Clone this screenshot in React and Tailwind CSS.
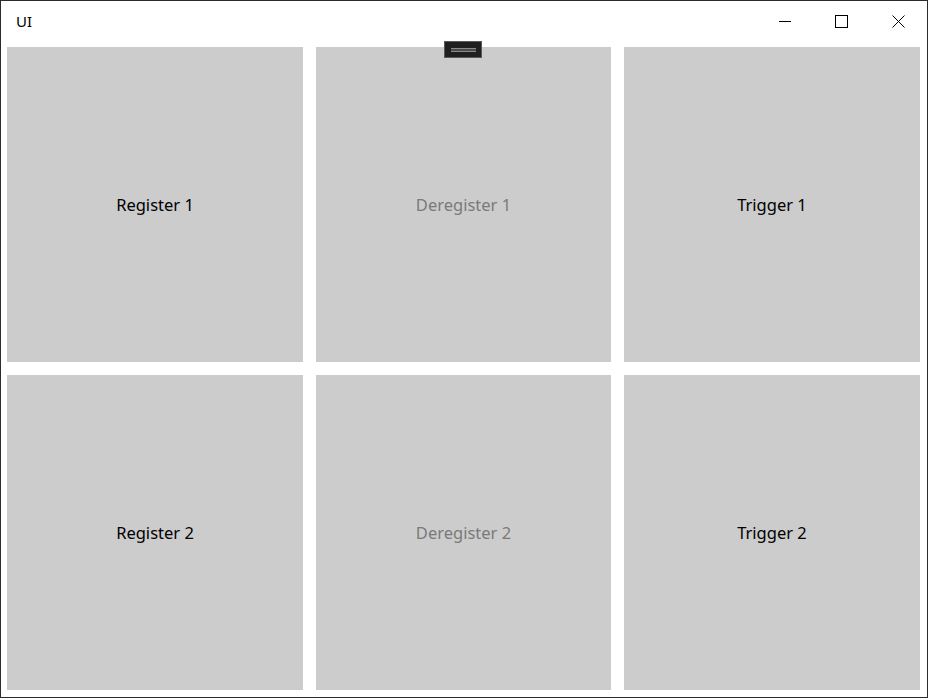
export default function App() {
  const cells = [
    { label: 'Register 1', enabled: true },
    { label: 'Deregister 1', enabled: false },
    { label: 'Trigger 1', enabled: true },
    { label: 'Register 2', enabled: true },
    { label: 'Deregister 2', enabled: false },
    { label: 'Trigger 2', enabled: true },
  ];

  return (
    <div
      className="relative w-[928px] h-[698px] border border-[#2b2b2b] bg-white flex flex-col"
      style={{ fontFamily: '"Segoe UI", "Noto Sans", "Open Sans", sans-serif' }}
    >
      {/* title bar */}
      <div className="h-[40px] flex items-center shrink-0">
        <span className="pl-[15px] text-[15px] text-black flex-1">UI</span>
        <div className="flex h-full">
          <button className="w-[57px] h-full flex items-center justify-center">
            <svg width="12" height="12" viewBox="0 0 12 12">
              <path d="M0 6.5H12" stroke="#000" strokeWidth="1" />
            </svg>
          </button>
          <button className="w-[57px] h-full flex items-center justify-center">
            <svg width="13" height="13" viewBox="0 0 13 13">
              <rect x="0.5" y="0.5" width="12" height="12" fill="none" stroke="#000" strokeWidth="1" />
            </svg>
          </button>
          <button className="w-[57px] h-full flex items-center justify-center">
            <svg width="13" height="13" viewBox="0 0 13 13">
              <path d="M0.5 0.5L12.5 12.5M12.5 0.5L0.5 12.5" stroke="#000" strokeWidth="1" />
            </svg>
          </button>
        </div>
      </div>

      {/* content */}
      <div className="grid grid-cols-[296px_295px_296px] grid-rows-[315px_315px] gap-[13px] pl-[6px] pt-[6px]">
        {cells.map((c) => (
          <div
            key={c.label}
            className={`bg-[#cccccc] flex items-center justify-center text-[16.5px] pt-[2px] ${
              c.enabled ? 'text-black' : 'text-[#7a7a7a]'
            }`}
          >
            {c.label}
          </div>
        ))}
      </div>

      {/* debug toolbar handle */}
      <div className="absolute left-[443px] top-[40px] w-[38px] h-[17px] bg-[#1f1f1f] border border-[#5a5a5a] flex items-center justify-center">
        <div className="w-[25px] h-[4px] border-y border-[#8a8a8a] bg-[#4a4a4a]" />
      </div>
    </div>
  );
}
